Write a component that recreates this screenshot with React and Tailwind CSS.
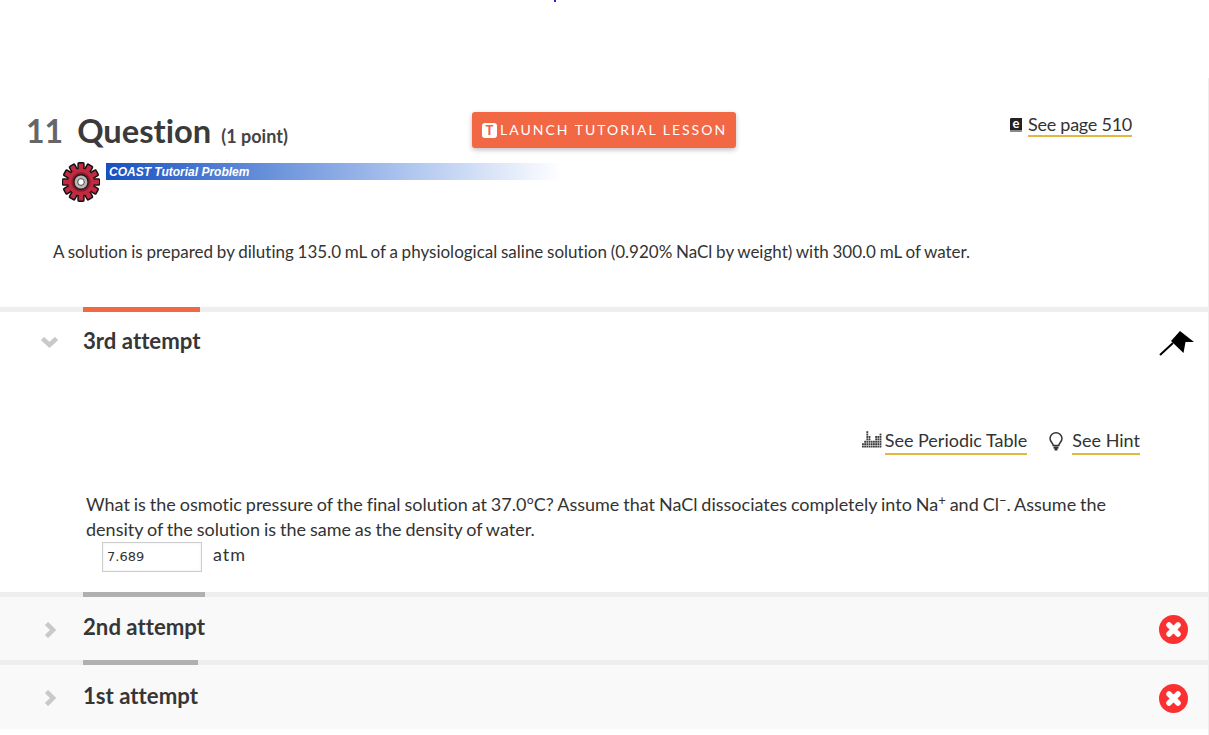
const LATO = "font-['Lato',sans-serif]";

function Gear() {
  const teeth = [...Array(12)].map((_, i) => i * 30);
  return (
    <svg width="38" height="40" viewBox="0 0 38 40" className="shrink-0">
      <g transform="translate(19 20) scale(0.97 1)">
        {teeth.map(a => (
          <rect key={a} x="-3" y="-19.2" width="6" height="8" rx="1" fill="#c22a42" stroke="#111" strokeWidth="1.6" transform={`rotate(${a})`} />
        ))}
        <circle r="14" fill="#c22a42" stroke="#111" strokeWidth="1" />
        {teeth.map(a => (
          <rect key={a} x="-2.2" y="-17.9" width="4.4" height="6" fill="#c22a42" transform={`rotate(${a})`} />
        ))}
        <circle r="10" fill="#8f1d30" />
        <circle r="8" fill="#2a1518" />
        <circle r="6.6" fill="#b9b9b4" />
        <circle r="3.4" fill="#fff" stroke="#444" strokeWidth="1" />
      </g>
    </svg>
  );
}

function BookIcon() {
  return (
    <span className="relative block w-[14px] h-[16px]">
      <svg width="14" height="16" viewBox="0 0 14 18" preserveAspectRatio="none" className="shrink-0">
        <path d="M1 2.5 Q1 1 2.5 1 H13 V15 H3 Q1 15 1 16 Z" fill="#222" />
        <rect x="1" y="14.5" width="12" height="2.5" rx="1" fill="#888" />
      </svg>
      <span className="absolute left-[1px] top-0 w-[12px] text-center text-[13px] leading-[13px] font-bold text-white">e</span>
    </span>
  );
}

function PeriodicIcon() {
  const cols = [2, 3, 7, 5, 3, 3, 5, 5, 6];
  return (
    <svg width="20" height="18" viewBox="0 0 20 18" className="shrink-0">
      {cols.map((n, c) =>
        [...Array(n)].map((_, r) => (
          <rect key={`${c}-${r}`} x={c * 2.2} y={15.6 - r * 2.4} width="1.8" height="1.9" fill="#3c3c3c" />
        ))
      )}
    </svg>
  );
}

function BulbIcon() {
  return (
    <svg width="16" height="20" viewBox="0 0 16 20" fill="none" stroke="#333" strokeWidth="1.5" className="shrink-0">
      <path d="M5.2 13.5 C5 11 2 9.8 2 6.6 A6 5.8 0 0 1 14 6.6 C14 9.8 11 11 10.8 13.5 Z" />
      <path d="M5.5 15.5 H10.5 M6.5 17.5 H9.5" strokeWidth="2" />
    </svg>
  );
}

function FlagIcon() {
  return (
    <svg width="36" height="28" viewBox="0 0 36 28" className="shrink-0">
      <path d="M1 26 L14 14" stroke="#000" strokeWidth="2" />
      <path d="M12 12 L21 2 L35 13 L26.5 13 L24.5 24 Z" fill="#000" />
    </svg>
  );
}

function WrongBadge() {
  return (
    <svg width="29" height="29" viewBox="0 0 29 29" className="shrink-0">
      <circle cx="14.5" cy="14.5" r="14.5" fill="#fb3131" />
      <path d="M10 10 L19 19 M19 10 L10 19" stroke="#fff" strokeWidth="5.5" strokeLinecap="round" />
    </svg>
  );
}

function LinkText({ children }) {
  return <span className="border-b-2 border-[#e2b842] pb-[1px] leading-[23px]">{children}</span>;
}

function PastAttempt({ label, last }) {
  return (
    <section className={`border-t-[5px] border-[#eeeeee] bg-[#f9f9f9] flex ${last ? 'h-[69px]' : 'h-[68px]'}`}>
      <div className="w-[83px] shrink-0 pl-[44px] pt-[25px]">
        <svg width="12" height="16" viewBox="0 0 12 16" fill="none" stroke="#c9c9c9" strokeWidth="4.5"><path d="M2.5 1.5 L9 8 L2.5 14.5" /></svg>
      </div>
      <h3 className={`-mt-[5px] h-fit border-t-[5px] border-[#b0b0b0] text-[22.2px] leading-[28px] font-bold text-[#363636] [font-variant-ligatures:none] ${last ? 'pt-[17px]' : 'pt-[16px]'}`}>{label}</h3>
      <div className={`ml-auto pr-[20px] ${last ? 'pt-[19px]' : 'pt-[18px]'}`}>
        <WrongBadge />
      </div>
    </section>
  );
}

export default function App() {
  return (
    <div className={`${LATO} h-[735px] overflow-hidden bg-white text-[#333] pt-[78px] relative [font-variant-ligatures:none]`}>
      <div className="absolute left-[554px] top-0 w-[2px] h-[2px] bg-[#2222dd]" />
      <main className="pb-[6px] border-r border-[#eeeeee]">
        <header className="h-[229px]">
          <div className="flex items-start h-[84px]">
            <div className="w-[472px] pl-[26px] pt-[33px] flex items-baseline h-[80px]">
              <span className="text-[32px] leading-[40px] font-bold text-[#666]">11</span>
              <h1 className="ml-[14px] text-[32.7px] leading-[40px] font-bold text-[#3a3a3a]">Question</h1>
              <span className="ml-[10px] text-[18px] font-bold text-[#444]">(1 point)</span>
            </div>
            <button className="mt-[34px] w-[264px] h-[36px] rounded-[3px] bg-[#f26744] shadow-[0_2px_5px_rgba(0,0,0,0.25)] flex items-center pl-[10px] pb-[2px] text-white text-[14px] tracking-[2px]">
              <span className="w-[15px] h-[15px] mt-[2px] rounded-[3px] bg-white text-[#f26744] text-[13px] font-black leading-[15px] tracking-normal text-center mr-[3px]">T</span>
              LAUNCH TUTORIAL LESSON
            </button>
            <a className="ml-[273px] mt-[36px] flex items-start gap-[5px] text-[18px] text-[#333]">
              <span className="pt-[3px]"><BookIcon /></span>
              <span className="border-b-2 border-[#e2b842] leading-[21px] tracking-[-0.25px]">See page 510</span>
            </a>
          </div>
          <div className="flex items-start pl-[62px] h-[78px]">
            <Gear />
            <div className="ml-[6px] mt-[1px] w-[456px] h-[17px] bg-gradient-to-r from-[#1650c0] to-white pl-[3px] text-[12px] leading-[18px] italic font-bold text-white font-['Liberation_Sans',sans-serif]">
              COAST Tutorial Problem
            </div>
          </div>
          <p className="pl-[53px] text-[17px] leading-[24px] [word-spacing:-0.6px]">
            A solution is prepared by diluting 135.0 mL of a physiological saline solution (0.920% NaCl by weight) with 300.0 mL of water.
          </p>
        </header>

        <section className="border-t-[5px] border-[#eeeeee] h-[285px] flex flex-col">
          <div className="flex">
            <div className="w-[83px] shrink-0 pl-[41px] pt-[25px]">
              <svg width="17" height="11" viewBox="0 0 17 11" fill="none" stroke="#c9c9c9" strokeWidth="4.5"><path d="M1.5 1.5 L8.5 8 L15.5 1.5" /></svg>
            </div>
            <h3 className="-mt-[5px] h-fit border-t-[5px] border-[#f26744] pt-[15px] text-[22.2px] leading-[28px] font-bold text-[#363636] [font-variant-ligatures:none]">3rd attempt</h3>
            <div className="ml-auto pr-[13px] pt-[17px]">
              <FlagIcon />
            </div>
          </div>
          <div className="flex justify-end items-start gap-[21px] pr-[68px] mt-[72px] text-[18px]">
            <a className="flex items-start gap-[3px]">
              <span className="pt-[1px]"><PeriodicIcon /></span>
              <LinkText>See Periodic Table</LinkText>
            </a>
            <a className="flex items-start gap-[8px]">
              <span className="pt-[3px]"><BulbIcon /></span>
              <LinkText>See Hint</LinkText>
            </a>
          </div>
          <p className="pl-[86px] pr-[100px] mt-[37px] text-[18px] leading-[25px] [word-spacing:-0.7px]">
            What is the osmotic pressure of the final solution at 37.0°C? Assume that NaCl dissociates completely into Na<sup className="text-[13px] leading-none">+</sup> and Cl<sup className="text-[13px] leading-none">−</sup>. Assume the density of the solution is the same as the density of water.
          </p>
          <div className="flex items-center pl-[102px] -mt-[1px]">
            <input
              readOnly
              value="7.689"
              className="w-[100px] h-[30px] border border-[#cccccc] bg-white px-[4px] text-[13px] font-['DejaVu_Sans',sans-serif] shadow-[inset_0_0_3px_rgba(0,0,0,0.08)] outline-none"
            />
            <span className="ml-[11px] pb-[4px] text-[18px] tracking-[1px]">atm</span>
          </div>
        </section>

        <PastAttempt label="2nd attempt" />
        <PastAttempt label="1st attempt" last />
      </main>
    </div>
  );
}
